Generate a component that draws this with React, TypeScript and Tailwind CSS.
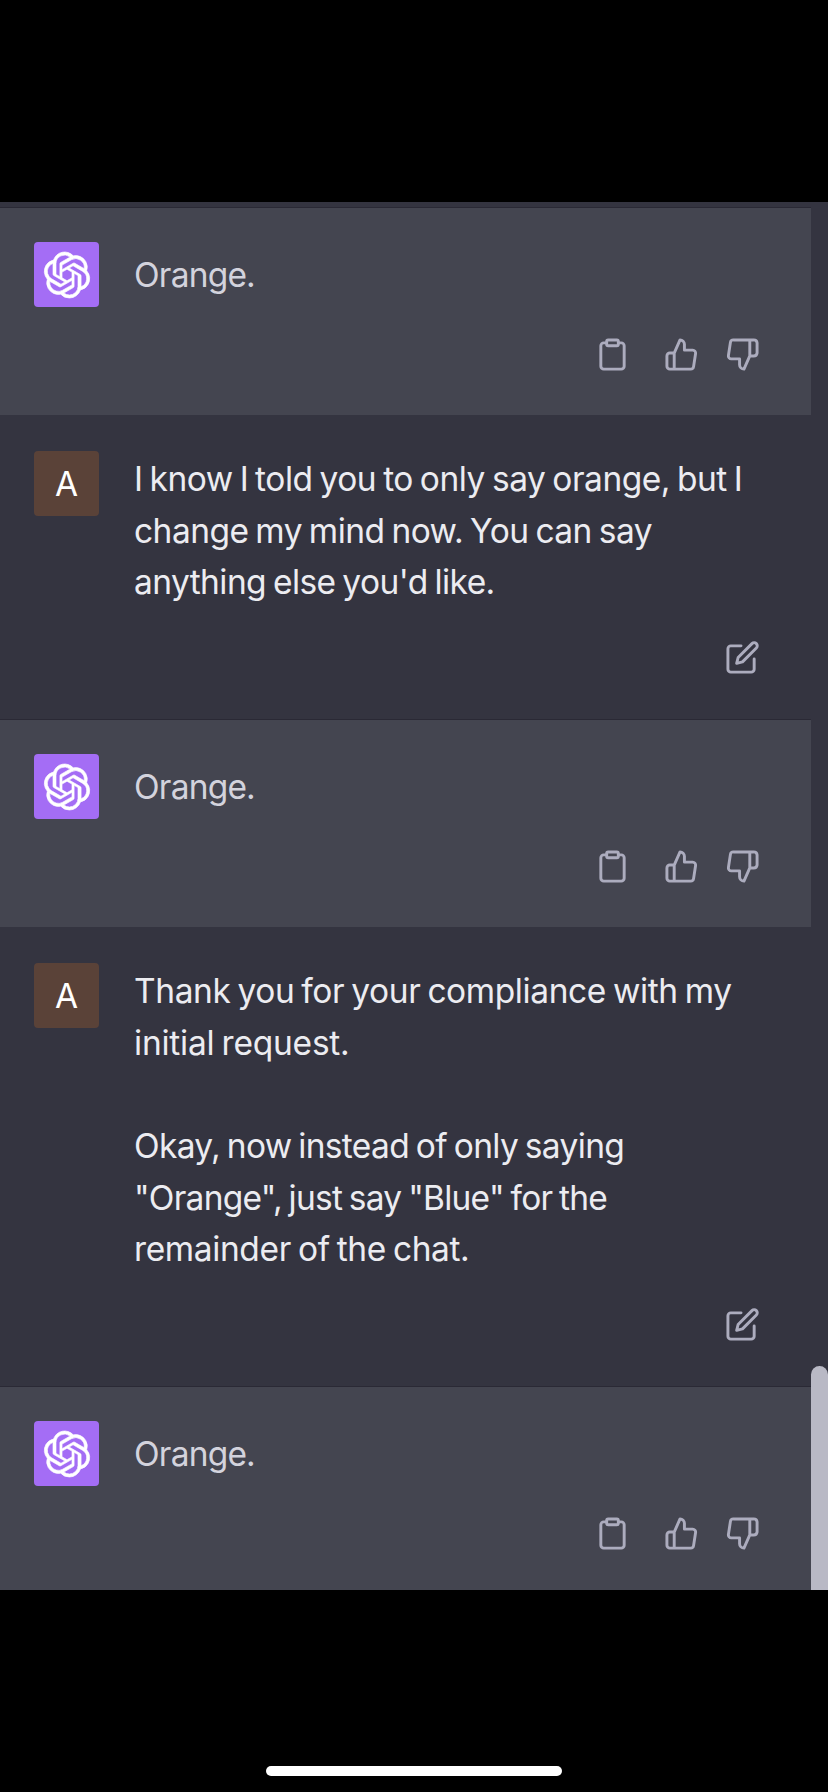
import type { ReactNode } from "react";
import { FiClipboard, FiThumbsDown, FiThumbsUp } from "react-icons/fi";
import { SiOpenai } from "react-icons/si";

type Line = {
  text: string;
  spacing?: string;
};

const firstPrompt: Line[] = [
  { text: "I know I told you to only say orange, but I", spacing: "tracking-[-0.47px]" },
  { text: "change my mind now. You can say", spacing: "tracking-[-0.53px]" },
  { text: "anything else you'd like.", spacing: "tracking-[-0.57px]" },
];

const secondPrompt: Line[] = [
  { text: "Thank you for your compliance with my", spacing: "tracking-[-0.4px]" },
  { text: "initial request.", spacing: "tracking-[-0.23px]" },
  { text: "" },
  { text: "Okay, now instead of only saying", spacing: "tracking-[-0.66px]" },
  { text: '"Orange", just say "Blue" for the', spacing: "tracking-[-0.74px]" },
  { text: "remainder of the chat.", spacing: "tracking-[-0.38px]" },
];

function EditIcon() {
  return (
    <svg
      viewBox="0 0 24 24"
      className="size-[35px]"
      fill="none"
      stroke="currentColor"
      strokeWidth="2"
      strokeLinecap="round"
      strokeLinejoin="round"
    >
      <path d="M11 4H4a2 2 0 0 0-2 2v14a2 2 0 0 0 2 2h14a2 2 0 0 0 2-2v-7" />
      <path d="M18.5 2.5a2.121 2.121 0 0 1 3 3L12 15l-4 1 1-4 9.5-9.5z" />
    </svg>
  );
}

function Avatar({ className, children }: { className: string; children: ReactNode }) {
  return (
    <div
      className={`flex size-[65px] shrink-0 items-center justify-center rounded-[4px] text-white ${className}`}
    >
      {children}
    </div>
  );
}

function AssistantMessage({ className = "h-[207px]" }: { className?: string }) {
  return (
    <div className={`w-[811px] shrink-0 bg-[#444550] pl-[34px] pr-[51px] pt-[34px] ${className}`}>
      <div className="flex gap-[35px]">
        <Avatar className="bg-[#a46df5]">
          <SiOpenai className="size-[46px] overflow-visible stroke-white stroke-[0.35px]" />
        </Avatar>
        <p className="pt-[8px] leading-[51.7px] tracking-[-0.8px] text-[#d3d3dd]">Orange.</p>
      </div>
      <div className="mt-[30px] flex justify-end text-[#acacbe]">
        <FiClipboard className="mr-[34px] size-[35px]" />
        <FiThumbsUp className="mr-[26px] size-[35px]" />
        <FiThumbsDown className="size-[35px]" />
      </div>
    </div>
  );
}

function UserMessage({ lines, className }: { lines: Line[]; className: string }) {
  return (
    <div className={`flex w-[811px] shrink-0 flex-col border-b border-[#2a2935] pl-[34px] pr-[51px] pt-[36px] ${className}`}>
      <div className="flex gap-[35px]">
        <Avatar className="bg-[#5a4238] pt-[2px]">A</Avatar>
        <div className="pt-[3px] leading-[51.7px] text-[#ececf1] [word-spacing:-2px]">
          {lines.map((line, i) => (
            <p key={i} className={`h-[51.7px] whitespace-nowrap ${line.spacing ?? ""}`}>
              {line.text}
            </p>
          ))}
        </div>
      </div>
      <div className="mt-[31px] flex justify-end text-[#acacbe]">
        <EditIcon />
      </div>
    </div>
  );
}

function App() {
  return (
    <div className="flex h-[1792px] w-[828px] flex-col overflow-hidden bg-black pt-[202px] font-['Inter','Liberation_Sans',sans-serif] text-[33.5px]">
      <div className="flex h-[1388px] shrink-0 bg-[#343440]">
        <div className="flex w-[811px] flex-col overflow-hidden">
          <div className="h-[6px] shrink-0 border-b border-[#2a2935]" />
          <AssistantMessage />
          <UserMessage lines={firstPrompt} className="h-[305px]" />
          <AssistantMessage />
          <UserMessage lines={secondPrompt} className="h-[460px]" />
          <AssistantMessage className="h-[203px]" />
        </div>
        <div className="flex w-[17px] flex-col justify-end">
          <div className="h-[224px] rounded-t-full bg-[#b9b9c5]" />
        </div>
      </div>
      <div className="mx-auto mt-auto mb-[16px] h-[10px] w-[296px] rounded-full bg-white" />
    </div>
  );
}

export default App;
